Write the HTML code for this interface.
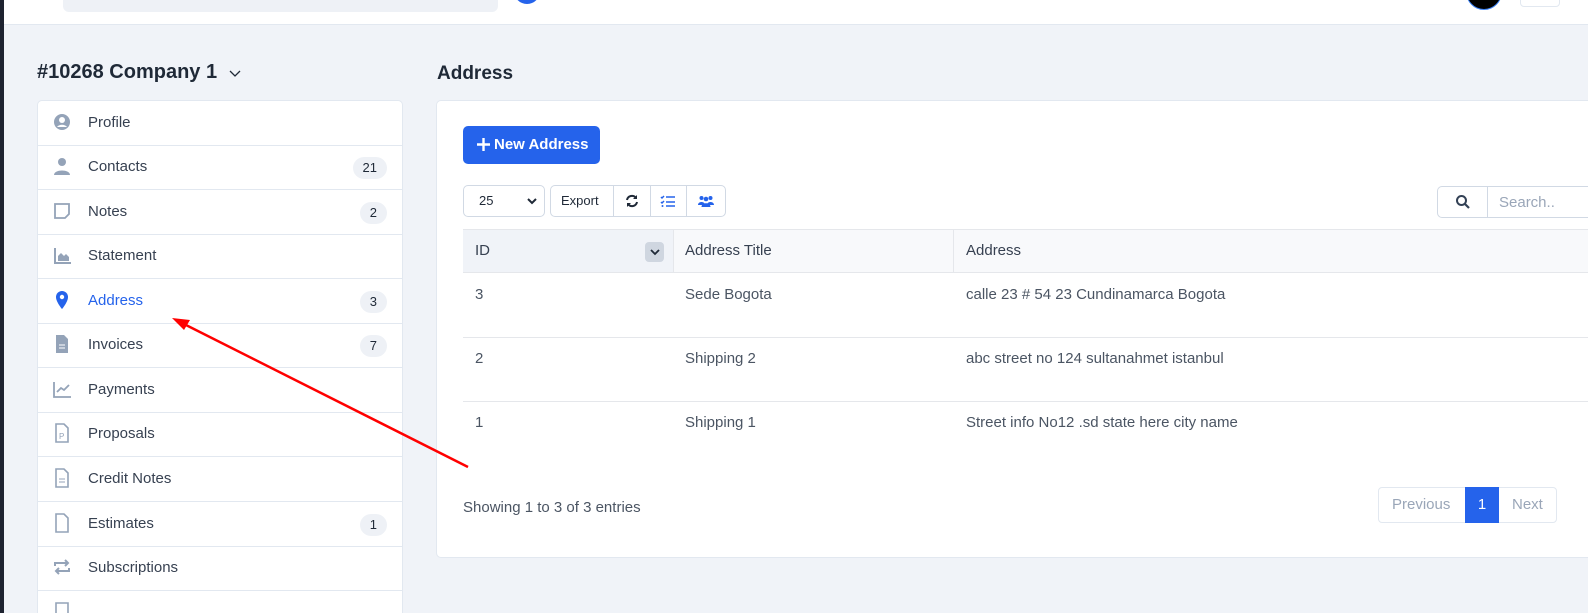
<!DOCTYPE html>
<html><head><style>
*{box-sizing:border-box;margin:0;padding:0}
html,body{width:1588px;height:613px;overflow:hidden}
body{background:#f0f3f8;font-family:"Liberation Sans",sans-serif;position:relative;color:#334155}
.a{position:absolute}
.top{left:0;top:0;width:1588px;height:25px;background:#fff;border-bottom:1px solid #e2e8f0}
.side{left:0;top:0;width:4px;height:613px;background:#1e2330}
.sb{left:37px;top:100px;width:366px;height:513px;background:#fff;border:1px solid #e2e8f0;border-bottom:0;border-radius:5px 5px 0 0;overflow:hidden}
.row{position:absolute;left:0;width:364px;height:45px;border-bottom:1px solid #e2e8f0}
.row span.t{position:absolute;left:50px;top:13px;font-size:15px;color:#374151}
.row .ic{position:absolute;left:14px;top:11px;width:20px;height:20px}
.bd{position:absolute;right:15px;top:12px;height:22px;padding:0 10px;border-radius:11px;background:#eef1f6;font-size:13px;line-height:22px;color:#1f2937}
.card{left:436px;top:100px;width:1152px;height:458px;background:#fff;border:1px solid #e2e8f0;border-right:0;border-radius:5px 0 0 5px}
.td{position:absolute;font-size:15px;color:#4b5563}
.th{position:absolute;font-size:15px;color:#374151}
.hl{position:absolute;left:463px;width:1125px;height:1px;background:#e5e7eb}
</style></head><body>
<div class="a top"></div>
<div class="a" style="left:63px;top:0;width:435px;height:12px;background:#eef1f6;border-radius:0 0 6px 6px"></div>
<div class="a" style="left:514px;top:-22px;width:26px;height:26px;border-radius:50%;background:#2563eb"></div>
<div class="a" style="left:1466px;top:-26px;width:36px;height:36px;border-radius:50%;background:#000;border:1px solid #3b82f6"></div>
<div class="a" style="left:1520px;top:-10px;width:40px;height:17px;border:1px solid #e2e8f0;border-radius:4px"></div>
<div class="a side"></div>
<div class="a" style="left:37px;top:61px;font-size:20px;font-weight:bold;color:#1f2937">#10268 Company 1</div>
<svg class="a" style="left:229px;top:70px" width="12" height="8" viewBox="0 0 12 8"><path d="M1 1l5 5 5-5" fill="none" stroke="#1f2937" stroke-width="1.3"/></svg>
<div class="a" style="left:437px;top:63px;font-size:19px;font-weight:bold;color:#1f2937">Address</div>
<div class="a sb">
<div class="row" style="top:0"><svg class="ic" viewBox="0 0 20 20"><circle cx="10" cy="10" r="8" fill="#94a3b8"/><circle cx="10" cy="8" r="3" fill="#fff"/><path d="M5 15c2-3 8-3 10 0" fill="#fff"/></svg><span class="t">Profile</span></div>
<div class="row" style="top:44px"><svg class="ic" viewBox="0 0 20 20"><circle cx="10" cy="6" r="4" fill="#94a3b8"/><path d="M2 19c0-6 16-6 16 0z" fill="#94a3b8"/></svg><span class="t">Contacts</span><span class="bd">21</span></div>
<div class="row" style="top:89px"><svg class="ic" viewBox="0 0 20 20"><path d="M3 3h14v10l-4 4H3z" fill="none" stroke="#94a3b8" stroke-width="1.8"/></svg><span class="t">Notes</span><span class="bd">2</span></div>
<div class="row" style="top:133px"><svg class="ic" viewBox="0 0 20 20"><path d="M3 3v15h16" fill="none" stroke="#94a3b8" stroke-width="2"/><path d="M6 16V11l3-3 3 3 2-2 3 3v4z" fill="#94a3b8"/></svg><span class="t">Statement</span></div>
<div class="row" style="top:178px"><svg class="ic" viewBox="0 0 20 20"><path d="M10 1a6 6 0 0 0-6 6c0 5 6 12 6 12s6-7 6-12a6 6 0 0 0-6-6z" fill="#2563eb"/><circle cx="10" cy="7" r="2.2" fill="#fff"/></svg><span class="t" style="color:#2563eb">Address</span><span class="bd">3</span></div>
<div class="row" style="top:222px"><svg class="ic" viewBox="0 0 20 20"><path d="M4 1h8l4 4v14H4z" fill="#94a3b8"/><path d="M7 11h6M7 14h6" stroke="#fff"/></svg><span class="t">Invoices</span><span class="bd">7</span></div>
<div class="row" style="top:267px"><svg class="ic" viewBox="0 0 20 20"><path d="M2 3v15h17M5 13l4-4 3 2 5-5" fill="none" stroke="#94a3b8" stroke-width="1.8"/></svg><span class="t">Payments</span></div>
<div class="row" style="top:311px"><svg class="ic" viewBox="0 0 20 20"><path d="M4 1h8l4 4v14H4z" fill="none" stroke="#94a3b8" stroke-width="1.6"/><text x="7" y="16" font-size="8" fill="#94a3b8" font-family="Liberation Sans">P</text></svg><span class="t">Proposals</span></div>
<div class="row" style="top:356px"><svg class="ic" viewBox="0 0 20 20"><path d="M4 1h8l4 4v14H4z" fill="none" stroke="#94a3b8" stroke-width="1.6"/><path d="M7 11h6M7 14h6" stroke="#94a3b8"/></svg><span class="t">Credit Notes</span></div>
<div class="row" style="top:401px"><svg class="ic" viewBox="0 0 20 20"><path d="M4 1h8l4 4v14H4z" fill="none" stroke="#94a3b8" stroke-width="1.6"/></svg><span class="t">Estimates</span><span class="bd">1</span></div>
<div class="row" style="top:445px"><svg class="ic" viewBox="0 0 20 20"><path d="M3 9V6h13M13 3l3 3-3 3M17 11v3H4M7 17l-3-3 3-3" fill="none" stroke="#94a3b8" stroke-width="2"/></svg><span class="t">Subscriptions</span></div>
<div class="row" style="top:490px;height:23px;border:0"><svg class="ic" viewBox="0 0 20 20"><path d="M4 19V1h12v18" fill="none" stroke="#94a3b8" stroke-width="1.6"/></svg></div>
</div>
<div class="a card"></div>
<div class="a" style="left:463px;top:126px;width:137px;height:38px;background:#2563eb;border-radius:5px;color:#fff;font-size:15px;font-weight:bold;line-height:38px;padding-left:31px">New Address</div>
<svg class="a" style="left:477px;top:138px" width="13" height="13" viewBox="0 0 13 13"><path d="M6.5 0v13M0 6.5h13" stroke="#fff" stroke-width="2.4"/></svg>
<div class="a" style="left:463px;top:185px;width:82px;height:32px;border:1px solid #d1d9e4;border-radius:5px;font-size:13px;line-height:30px;padding-left:15px;color:#1f2937">25</div>
<svg class="a" style="left:527px;top:198px" width="10" height="7" viewBox="0 0 10 7"><path d="M1 1l4 4 4-4" fill="none" stroke="#1f2937" stroke-width="2"/></svg>
<div class="a" style="left:550px;top:185px;width:176px;height:32px;border:1px solid #d1d9e4;border-radius:5px;font-size:13px;line-height:30px">
<span class="a" style="left:10px;color:#1f2937">Export</span>
<span class="a" style="left:62px;top:0;width:1px;height:30px;background:#d1d9e4"></span>
<svg class="a" style="left:74px;top:8px" width="14" height="14" viewBox="0 0 14 14"><path d="M2 6a5 5 0 0 1 9-2M12 8a5 5 0 0 1-9 2" fill="none" stroke="#1f2937" stroke-width="2"/><path d="M12 1v4H8zM2 13V9h4z" fill="#1f2937"/></svg>
<span class="a" style="left:99px;top:0;width:1px;height:30px;background:#d1d9e4"></span>
<svg class="a" style="left:109px;top:8px" width="16" height="14" viewBox="0 0 16 14"><path d="M1 3l1 1 2-2M1 8l1 1 2-2M6 3h9M6 8h9M6 12h9" fill="none" stroke="#2563eb" stroke-width="1.5"/><circle cx="2.5" cy="12" r="1" fill="#2563eb"/></svg>
<span class="a" style="left:135px;top:0;width:1px;height:30px;background:#d1d9e4"></span>
<svg class="a" style="left:147px;top:8px" width="16" height="14" viewBox="0 0 16 14"><circle cx="3.5" cy="4" r="2" fill="#2563eb"/><circle cx="12.5" cy="4" r="2" fill="#2563eb"/><circle cx="8" cy="5" r="2.3" fill="#2563eb"/><path d="M0 11c0-4 7-4 7 0zM9 11c0-4 7-4 7 0zM3.5 13c0-5 9-5 9 0z" fill="#2563eb"/></svg>
</div>
<div class="a" style="left:1437px;top:186px;width:151px;height:32px;border:1px solid #d1d9e4;border-right:0;border-radius:5px 0 0 5px">
<svg class="a" style="left:17px;top:7px" width="16" height="16" viewBox="0 0 16 16"><circle cx="6.5" cy="6.5" r="4.5" fill="none" stroke="#334155" stroke-width="2"/><path d="M10 10l4 4" stroke="#334155" stroke-width="2.2"/></svg>
<span class="a" style="left:49px;top:0;width:1px;height:30px;background:#d1d9e4"></span>
<span class="a" style="left:61px;top:7px;font-size:15px;color:#9aa6b8">Search..</span></div>
<div class="a" style="left:463px;top:229px;width:1125px;height:44px;background:#f8f9fb;border-top:1px solid #e5e7eb;border-bottom:1px solid #e5e7eb"></div>
<div class="a" style="left:463px;top:230px;width:210px;height:42px;background:#f0f3f8"></div>
<div class="a" style="left:673px;top:230px;width:1px;height:42px;background:#e5e7eb"></div>
<div class="a" style="left:953px;top:230px;width:1px;height:42px;background:#e5e7eb"></div>
<div class="a" style="left:645px;top:242px;width:19px;height:20px;background:#cfd6e0;border-radius:4px"></div>
<svg class="a" style="left:650px;top:249px" width="10" height="7" viewBox="0 0 10 7"><path d="M1 1l4 4 4-4" fill="none" stroke="#1f2937" stroke-width="1.8"/></svg>
<div class="th" style="left:475px;top:242px">ID</div>
<div class="th" style="left:685px;top:242px">Address Title</div>
<div class="th" style="left:966px;top:242px">Address</div>
<div class="td" style="left:475px;top:286px">3</div><div class="td" style="left:685px;top:286px">Sede Bogota</div><div class="td" style="left:966px;top:286px">calle 23 # 54 23 Cundinamarca Bogota</div>
<div class="hl" style="top:337px"></div>
<div class="td" style="left:475px;top:350px">2</div><div class="td" style="left:685px;top:350px">Shipping 2</div><div class="td" style="left:966px;top:350px">abc street no 124 sultanahmet istanbul</div>
<div class="hl" style="top:401px"></div>
<div class="td" style="left:475px;top:414px">1</div><div class="td" style="left:685px;top:414px">Shipping 1</div><div class="td" style="left:966px;top:414px">Street info No12 .sd state here city name</div>
<div class="td" style="left:463px;top:499px">Showing 1 to 3 of 3 entries</div>
<div class="a" style="left:1378px;top:487px;width:179px;height:36px;border:1px solid #e2e8f0;border-radius:4px;font-size:15px;color:#9aa6b8;line-height:34px">
<span class="a" style="left:13px">Previous</span>
<span class="a" style="left:86px;top:-1px;width:34px;height:36px;background:#2563eb;color:#fff;text-align:center;line-height:36px">1</span>
<span class="a" style="left:133px">Next</span></div>
<svg class="a" style="left:0;top:0" width="1588" height="613"><line x1="468" y1="467" x2="180" y2="322" stroke="#f00" stroke-width="2.5"/><path d="M172 318l18 2-6 10z" fill="#f00"/></svg>
</body></html>
